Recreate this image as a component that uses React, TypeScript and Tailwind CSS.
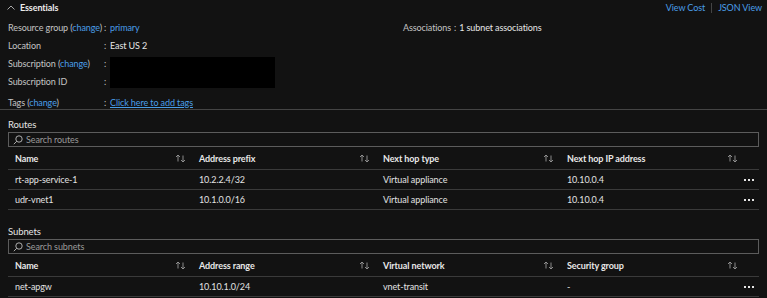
import React from "react";

const font = { fontFamily: 'Lato, "Open Sans", Arial, sans-serif' };

function SortIcon() {
  return (
    <svg width="11" height="9" viewBox="0 0 11 9" fill="none" stroke="#9a9a9a" strokeWidth="0.9">
      <path d="M3 7.5V1M1 3l2-2 2 2" />
      <path d="M8 1.5V8M6 6l2 2 2-2" />
    </svg>
  );
}

function SearchIcon() {
  return (
    <svg width="10" height="10" viewBox="0 0 10 10" fill="none" stroke="#bdbdbd" strokeWidth="0.9">
      <circle cx="6" cy="4" r="3.2" />
      <path d="M3.7 6.3L0.8 9.2" />
    </svg>
  );
}

function Dots() {
  return (
    <div className="flex gap-[2px] items-center">
      <span className="w-[2px] h-[2px] bg-[#e6e6e6]" />
      <span className="w-[2px] h-[2px] bg-[#e6e6e6]" />
      <span className="w-[2px] h-[2px] bg-[#e6e6e6]" />
    </div>
  );
}

function Label({ text, link }: { text: string; link?: boolean }) {
  return (
    <span className="text-[#c4c4c4] whitespace-nowrap">
      {text}
      {link && (
        <>
          {" ("}
          <span className="text-[#4a9ee8]">change</span>
          {")"}
        </>
      )}
    </span>
  );
}

function Table({
  search,
  cols,
  rows,
}: {
  search: string;
  cols: string[];
  rows: string[][];
}) {
  return (
    <div>
      <div className="h-[15px] border border-[#5c5c5c] flex items-center pl-[4px] gap-[3px]">
        <SearchIcon />
        <span className="text-[#9a9a9a]">{search}</span>
      </div>
      <div className="grid grid-cols-[184px_184px_184px_184px_1fr] h-[23px] items-center border-b border-[#3a3a3a] font-bold text-[#e8e8e8]">
        {cols.map((c) => (
          <div key={c} className="flex items-center justify-between pl-[7px] pr-[6px]">
            <span>{c}</span>
            <SortIcon />
          </div>
        ))}
        <div />
      </div>
      {rows.map((r, i) => (
        <div
          key={i}
          className="grid grid-cols-[184px_184px_184px_184px_1fr] h-[20px] items-center border-b border-[#3a3a3a] text-[#e2e2e2]"
        >
          {r.map((v, j) => (
            <div key={j} className="pl-[7px]">
              {v}
            </div>
          ))}
          <div className="flex justify-end pr-[7px]">
            <Dots />
          </div>
        </div>
      ))}
    </div>
  );
}

export default function App() {
  return (
    <div
      className="w-[767px] h-[298px] bg-[#121212] text-[9px] tracking-[-0.1px] leading-none overflow-hidden"
      style={font}
    >
      <div className="flex items-center justify-between h-[15px] pl-[7px] pr-[5px]">
        <div className="flex items-center gap-[5px]">
          <svg width="8" height="5" viewBox="0 0 8 5" fill="none" stroke="#bbbbbb" strokeWidth="0.9">
            <path d="M0.5 4.5L4 1l3.5 3.5" />
          </svg>
          <span className="font-bold text-[#ececec]">Essentials</span>
        </div>
        <div className="flex items-center text-[#4a9ee8]">
          <span>View Cost</span>
          <span className="w-px h-[10px] bg-[#444] mx-[6px]" />
          <span>JSON View</span>
        </div>
      </div>

      <div className="flex px-[8px] pt-[3px]">
        <div className="w-[395px] shrink-0">
          {[
            { t: "Resource group", l: true, v: <span className="text-[#4a9ee8]">primary</span> },
            { t: "Location", l: false, v: <span className="text-[#e6e6e6]">East US 2</span> },
            { t: "Subscription", l: true, v: null },
            { t: "Subscription ID", l: false, v: null },
          ].map((r, i) => (
            <div key={i} className="flex items-center h-[18px]">
              <div className="w-[96px] shrink-0">
                <Label text={r.t} link={r.l} />
              </div>
              <span className="text-[#c4c4c4] w-[6px] shrink-0">:</span>
              <div className="relative">
                {r.v}
                {i === 2 && (
                  <div className="absolute left-0 top-[-6px] w-[165px] h-[31px] bg-black" />
                )}
              </div>
            </div>
          ))}
          <div className="flex items-center h-[18px] mt-[3px]">
            <div className="w-[96px] shrink-0">
              <Label text="Tags" link />
            </div>
            <span className="text-[#c4c4c4] w-[6px] shrink-0">:</span>
            <span className="text-[#4a9ee8] underline">Click here to add tags</span>
          </div>
        </div>
        <div className="flex items-center h-[18px] whitespace-nowrap">
          <span className="text-[#c4c4c4] mr-[3px]">Associations</span>
          <span className="text-[#c4c4c4] mr-[3px]">:</span>
          <span className="text-[#e6e6e6]">1 subnet associations</span>
        </div>
      </div>

      <div className="border-t border-[#444] mt-[-2px]" />

      <div className="px-[8px]">
        <div className="h-[22px] flex items-end pb-[3px] text-[9.5px] text-[#e6e6e6]">Routes</div>
        <Table
          search="Search routes"
          cols={["Name", "Address prefix", "Next hop type", "Next hop IP address"]}
          rows={[
            ["rt-app-service-1", "10.2.2.4/32", "Virtual appliance", "10.10.0.4"],
            ["udr-vnet1", "10.1.0.0/16", "Virtual appliance", "10.10.0.4"],
          ]}
        />
        <div className="h-[29px] flex items-end pb-[3px] text-[9.5px] text-[#e6e6e6]">Subnets</div>
        <Table
          search="Search subnets"
          cols={["Name", "Address range", "Virtual network", "Security group"]}
          rows={[["net-apgw", "10.10.1.0/24", "vnet-transit", "-"]]}
        />
      </div>
    </div>
  );
}
